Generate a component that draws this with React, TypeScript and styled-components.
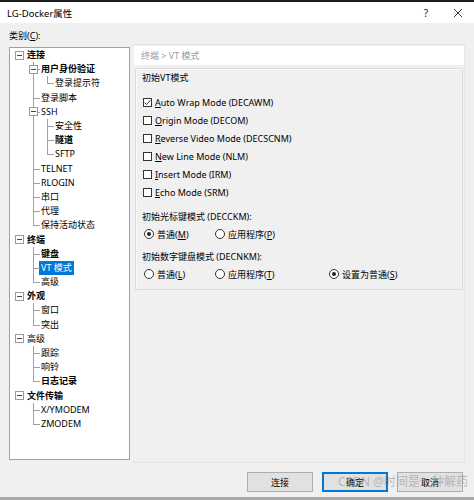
import { Fragment } from 'react'
import styled, { createGlobalStyle } from 'styled-components'

const FONT = `"Noto Sans", "Noto Sans CJK SC", sans-serif`

const GlobalStyle = createGlobalStyle`
  html, body {
    margin: 0;
    padding: 0;
    background: #f0f0f0;
  }
  body {
    font-family: ${FONT};
    font-size: 9px;
    color: #000;
  }
`

type TreeNode = {
  level: number
  label: string
  bold?: boolean
  open?: boolean
  selected?: boolean
}

const treeNodes: TreeNode[] = [
  { level: 0, label: '连接', bold: true, open: true },
  { level: 1, label: '用户身份验证', bold: true, open: true },
  { level: 2, label: '登录提示符' },
  { level: 1, label: '登录脚本' },
  { level: 1, label: 'SSH', open: true },
  { level: 2, label: '安全性' },
  { level: 2, label: '隧道', bold: true },
  { level: 2, label: 'SFTP' },
  { level: 1, label: 'TELNET' },
  { level: 1, label: 'RLOGIN' },
  { level: 1, label: '串口' },
  { level: 1, label: '代理' },
  { level: 1, label: '保持活动状态' },
  { level: 0, label: '终端', bold: true, open: true },
  { level: 1, label: '键盘', bold: true },
  { level: 1, label: 'VT 模式', selected: true },
  { level: 1, label: '高级' },
  { level: 0, label: '外观', bold: true, open: true },
  { level: 1, label: '窗口' },
  { level: 1, label: '突出' },
  { level: 0, label: '高级', open: true },
  { level: 1, label: '跟踪' },
  { level: 1, label: '响铃' },
  { level: 1, label: '日志记录', bold: true },
  { level: 0, label: '文件传输', bold: true, open: true },
  { level: 1, label: 'X/YMODEM' },
  { level: 1, label: 'ZMODEM' },
]

type GuideKind = 'blank' | 'pipe' | 'tee' | 'elbow'

// is there a later sibling of the node at index i (same level, before the parent closes)
function hasNextSibling(i: number, level: number) {
  for (let j = i + 1; j < treeNodes.length; j++) {
    if (treeNodes[j].level < level) return false
    if (treeNodes[j].level === level) return true
  }
  return false
}

function guidesFor(i: number): GuideKind[] {
  const node = treeNodes[i]
  const guides: GuideKind[] = []
  // root column never draws lines
  guides.push('blank')
  for (let k = 1; k < node.level; k++) {
    let ancestor = i
    while (treeNodes[ancestor].level !== k) ancestor--
    guides.push(hasNextSibling(ancestor, k) ? 'pipe' : 'blank')
  }
  if (node.level > 0) guides.push(hasNextSibling(i, node.level) ? 'tee' : 'elbow')
  return guides
}

const Window = styled.div`
  width: 474px;
  height: 500px;
  display: flex;
  flex-direction: column;
  background: #f0f0f0;
  position: relative;
  overflow: hidden;
`

const TitleBar = styled.div`
  height: 21px;
  border-top: 2px solid #1c1c1c;
  background: #fff;
  display: flex;
  align-items: center;
  padding-left: 7px;
  font-size: 9.5px;
`

const TitleText = styled.span`
  flex: 1;
`

const TitleButton = styled.span`
  width: 32px;
  height: 21px;
  display: flex;
  align-items: center;
  justify-content: center;
  color: #222;
  font-size: 10px;
`

const Body = styled.div`
  flex: 1;
  display: flex;
  flex-direction: column;
  padding: 6px 9px 0 9px;
`

const Main = styled.div`
  display: grid;
  grid-template-columns: 121px 1fr;
  column-gap: 3px;
  height: 434px;
`

const LeftColumn = styled.div`
  display: flex;
  flex-direction: column;
`

const FieldLabel = styled.div`
  height: 18px;
  line-height: 14px;
`

const TreeBox = styled.div`
  height: 413px;
  box-sizing: border-box;
  border: 1px solid #a0a0a0;
  background: #fff;
  padding-left: 2px;
`

const TreeRow = styled.div`
  display: flex;
  align-items: center;
  height: 14.2px;
  white-space: nowrap;
`

const Guide = styled.span<{ $kind: GuideKind }>`
  position: relative;
  flex: none;
  width: 14px;
  height: 100%;

  &::before {
    content: '';
    position: absolute;
    left: 7px;
    top: 0;
    width: 1px;
    background: #a0a0a0;
    display: ${(p) => (p.$kind === 'blank' ? 'none' : 'block')};
    height: ${(p) => (p.$kind === 'elbow' ? '50%' : '100%')};
  }

  &::after {
    content: '';
    position: absolute;
    left: 7px;
    top: 50%;
    width: 7px;
    height: 1px;
    background: #a0a0a0;
    display: ${(p) => (p.$kind === 'tee' || p.$kind === 'elbow' ? 'block' : 'none')};
  }
`

const Expander = styled.span`
  position: absolute;
  z-index: 1;
  left: 3px;
  top: 50%;
  margin-top: -4.5px;
  width: 9px;
  height: 9px;
  box-sizing: border-box;
  border: 1px solid #9a9a9a;
  background: #fff;

  &::after {
    content: '';
    position: absolute;
    left: 1px;
    top: 3px;
    width: 5px;
    height: 1px;
    background: #444;
  }
`

const NodeLabel = styled.span<{ $bold?: boolean; $selected?: boolean }>`
  margin-left: -1px;
  padding: 0 2px;
  height: 14px;
  line-height: 14px;
  font-weight: ${(p) => (p.$bold ? 700 : 400)};
  background: ${(p) => (p.$selected ? '#0078d7' : 'transparent')};
  color: ${(p) => (p.$selected ? '#fff' : '#000')};
`

const Page = styled.div`
  margin-top: 15px;
  height: 419px;
  box-sizing: border-box;
  border: 1px solid #e6e6e6;
  border-left: none;
  padding: 1px 0 0 1px;
  display: flex;
  flex-direction: column;
`

const Breadcrumb = styled.div`
  height: 19px;
  background: #fff;
  color: #9a9a9a;
  padding-left: 7px;
  display: flex;
  align-items: center;
`

const Group = styled.div`
  margin: 3px 1px 0 1px;
  height: 222px;
  box-sizing: border-box;
  border: 1px solid #dcdcdc;
  box-shadow: inset 1px 1px 0 #fbfbfb;
  padding: 3px 0 0 6px;
  display: flex;
  flex-direction: column;
`

const GroupTitle = styled.div`
  height: 12px;
  line-height: 12px;
`

const CheckList = styled.div`
  margin-top: 9px;
  padding-left: 1px;
  display: flex;
  flex-direction: column;
`

const OptionRow = styled.label`
  display: flex;
  align-items: center;
  gap: 3px;
  height: 18px;
`

const CheckBox = styled.span`
  width: 9px;
  height: 9px;
  box-sizing: border-box;
  border: 1px solid #333;
  background: #fff;
  display: flex;
  align-items: center;
  justify-content: center;
  flex: none;
`

const SubTitle = styled.div<{ $top: number }>`
  margin-top: ${(p) => p.$top}px;
  height: 12px;
  line-height: 12px;
`

const RadioRow = styled.div`
  margin-top: 3px;
  padding-left: 2px;
  display: grid;
  grid-template-columns: 71px 114px auto;
  height: 16px;
  align-items: center;
`

const RadioOption = styled.label`
  display: flex;
  align-items: center;
  gap: 3px;
`

const RadioCircle = styled.span<{ $checked?: boolean }>`
  position: relative;
  width: 10px;
  height: 10px;
  box-sizing: border-box;
  border: 1px solid #333;
  border-radius: 50%;
  background: #fff;
  flex: none;

  &::after {
    content: '';
    position: absolute;
    left: 2px;
    top: 2px;
    width: 4px;
    height: 4px;
    border-radius: 50%;
    background: #222;
    display: ${(p) => (p.$checked ? 'block' : 'none')};
  }
`

const Footer = styled.div`
  display: flex;
  justify-content: flex-end;
  gap: 9px;
  margin-top: 9px;
  padding-right: 2px;
`

const Button = styled.button<{ $default?: boolean }>`
  width: 66px;
  height: 20px;
  box-sizing: border-box;
  margin: 0;
  padding: 0;
  font-family: ${FONT};
  font-size: 9px;
  color: #000;
  background: #e1e1e1;
  border: 1px solid ${(p) => (p.$default ? '#0078d7' : '#adadad')};
  box-shadow: ${(p) => (p.$default ? 'inset 0 0 0 1px #0078d7' : 'none')};
`

const BottomEdge = styled.div`
  position: absolute;
  left: 0;
  right: 0;
  bottom: 0;
  height: 3px;
  background: #a9a9a9;
`

const Watermark = styled.div`
  position: absolute;
  right: 6px;
  bottom: 10px;
  font-size: 12px;
  color: rgba(140, 140, 140, 0.55);
  pointer-events: none;
  white-space: nowrap;
`

const checkOptions: { key: string; rest: string; checked?: boolean }[] = [
  { key: 'A', rest: 'uto Wrap Mode (DECAWM)', checked: true },
  { key: 'O', rest: 'rigin Mode (DECOM)' },
  { key: 'R', rest: 'everse Video Mode (DECSCNM)' },
  { key: 'N', rest: 'ew Line Mode (NLM)' },
  { key: 'I', rest: 'nsert Mode (IRM)' },
  { key: 'E', rest: 'cho Mode (SRM)' },
]

function Radio({ label, mn, checked }: { label: string; mn: string; checked?: boolean }) {
  return (
    <RadioOption>
      <RadioCircle $checked={checked} />
      <span>
        {label}(<u>{mn}</u>)
      </span>
    </RadioOption>
  )
}

function Tree() {
  return (
    <TreeBox>
      {treeNodes.map((node, i) => {
        const guides = guidesFor(i)
        return (
          <TreeRow key={i}>
            {guides.map((g, k) => (
              <Guide key={k} $kind={g}>
                {k === node.level && node.open && <Expander />}
              </Guide>
            ))}
            <NodeLabel $bold={node.bold} $selected={node.selected}>
              {node.label}
            </NodeLabel>
          </TreeRow>
        )
      })}
    </TreeBox>
  )
}

export default function App() {
  return (
    <>
      <GlobalStyle />
      <Window>
        <TitleBar>
          <TitleText>LG-Docker属性</TitleText>
          <TitleButton>?</TitleButton>
          <TitleButton>
            <svg width="10" height="10" viewBox="0 0 10 10">
              <path d="M1 1 L9 9 M9 1 L1 9" stroke="#222" strokeWidth="0.9" fill="none" />
            </svg>
          </TitleButton>
        </TitleBar>
        <Body>
          <Main>
            <LeftColumn>
              <FieldLabel>
                类别(<u>C</u>):
              </FieldLabel>
              <Tree />
            </LeftColumn>
            <Page>
              <Breadcrumb>终端 &gt; VT 模式</Breadcrumb>
              <Group>
                <GroupTitle>初始VT模式</GroupTitle>
                <CheckList>
                  {checkOptions.map((o) => (
                    <OptionRow key={o.key}>
                      <CheckBox>
                        {o.checked && (
                          <svg width="7" height="7" viewBox="0 0 7 7">
                            <path d="M0.6 3.6 L2.6 5.6 L6.4 1.2" stroke="#222" strokeWidth="0.9" fill="none" />
                          </svg>
                        )}
                      </CheckBox>
                      <span>
                        <u>{o.key}</u>
                        {o.rest}
                      </span>
                    </OptionRow>
                  ))}
                </CheckList>
                <SubTitle $top={10}>初始光标键模式 (DECCKM):</SubTitle>
                <RadioRow>
                  <Radio label="普通" mn="M" checked />
                  <Radio label="应用程序" mn="P" />
                </RadioRow>
                <SubTitle $top={9}>初始数字键盘模式 (DECNKM):</SubTitle>
                <RadioRow>
                  <Radio label="普通" mn="L" />
                  <Radio label="应用程序" mn="T" />
                  <Radio label="设置为普通" mn="S" checked />
                </RadioRow>
              </Group>
            </Page>
          </Main>
          <Footer>
            {['连接', '确定', '取消'].map((t) => (
              <Fragment key={t}>
                <Button $default={t === '确定'}>{t}</Button>
              </Fragment>
            ))}
          </Footer>
        </Body>
        <Watermark>CSDN @时间是一种解药</Watermark>
        <BottomEdge />
      </Window>
    </>
  )
}
